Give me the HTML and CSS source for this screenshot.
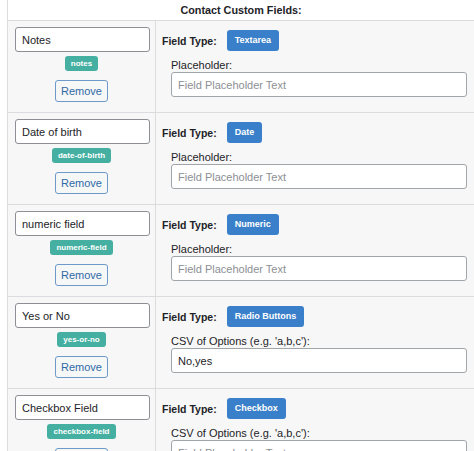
FILE: index.html
```html
<!DOCTYPE html>
<html>
<head>
<meta charset="utf-8">
<link rel="stylesheet" href="styles.css">
</head>
<body>
<div class="panel">
  <div class="panel-head">Contact Custom Fields:</div>

  <div class="row">
    <div class="cell-left">
      <input class="name-input" type="text" value="Notes">
      <span class="slug">notes</span>
      <button class="remove">Remove</button>
    </div>
    <div class="cell-right">
      <div class="type-line"><span class="type-label">Field Type:</span><span class="type-badge">Textarea</span></div>
      <div class="sub">
        <div class="sub-label">Placeholder:</div>
        <input class="sub-input" type="text" placeholder="Field Placeholder Text">
      </div>
    </div>
  </div>

  <div class="row">
    <div class="cell-left">
      <input class="name-input" type="text" value="Date of birth">
      <span class="slug">date-of-birth</span>
      <button class="remove">Remove</button>
    </div>
    <div class="cell-right">
      <div class="type-line"><span class="type-label">Field Type:</span><span class="type-badge">Date</span></div>
      <div class="sub">
        <div class="sub-label">Placeholder:</div>
        <input class="sub-input" type="text" placeholder="Field Placeholder Text">
      </div>
    </div>
  </div>

  <div class="row">
    <div class="cell-left">
      <input class="name-input" type="text" value="numeric field">
      <span class="slug">numeric-field</span>
      <button class="remove">Remove</button>
    </div>
    <div class="cell-right">
      <div class="type-line"><span class="type-label">Field Type:</span><span class="type-badge">Numeric</span></div>
      <div class="sub">
        <div class="sub-label">Placeholder:</div>
        <input class="sub-input" type="text" placeholder="Field Placeholder Text">
      </div>
    </div>
  </div>

  <div class="row">
    <div class="cell-left">
      <input class="name-input" type="text" value="Yes or No">
      <span class="slug">yes-or-no</span>
      <button class="remove">Remove</button>
    </div>
    <div class="cell-right">
      <div class="type-line"><span class="type-label">Field Type:</span><span class="type-badge">Radio Buttons</span></div>
      <div class="sub">
        <div class="sub-label">CSV of Options (e.g. 'a,b,c'):</div>
        <input class="sub-input" type="text" value="No,yes">
      </div>
    </div>
  </div>

  <div class="row">
    <div class="cell-left">
      <input class="name-input" type="text" value="Checkbox Field">
      <span class="slug">checkbox-field</span>
      <button class="remove">Remove</button>
    </div>
    <div class="cell-right">
      <div class="type-line"><span class="type-label">Field Type:</span><span class="type-badge">Checkbox</span></div>
      <div class="sub">
        <div class="sub-label">CSV of Options (e.g. 'a,b,c'):</div>
        <input class="sub-input" type="text" placeholder="Field Placeholder Text">
      </div>
    </div>
  </div>
</div>
</body>
</html>
```

FILE: styles.css
```css
html, body {
  margin: 0;
  padding: 0;
  background: #ffffff;
  overflow: hidden;
}
body {
  font-family: "Liberation Sans", Arial, sans-serif;
  font-size: 11px;
  color: #1d2327;
}
* { box-sizing: border-box; }

.panel {
  margin-left: 7px;
  border-left: 1px solid #dcdcde;
}
.panel-head {
  height: 21px;
  line-height: 20px;
  border-bottom: 1px solid #dcdcde;
  text-align: center;
  font-weight: bold;
  font-size: 10.8px;
  background: #ffffff;
}
.row {
  display: grid;
  grid-template-columns: 148px 1fr;
  background: #f7f7f7;
  border-bottom: 1px solid #dcdcde;
}
.cell-left {
  border-right: 1px solid #dcdcde;
  padding: 6px 7px 10px 7px;
  display: flex;
  flex-direction: column;
  align-items: center;
}
.name-input {
  align-self: flex-start;
  width: 135px;
  height: 25px;
  border: 1px solid #8c8f94;
  border-radius: 3px;
  background: #fff;
  padding: 0 6px;
  font-family: inherit;
  font-size: 11px;
  color: #1d2327;
  margin: 0;
}
.slug {
  margin-top: 4px;
  height: 15px;
  line-height: 15px;
  padding: 0 6px;
  background: #45b0a1;
  color: #fff;
  font-weight: bold;
  font-size: 8px;
  border-radius: 3px;
}
.remove {
  margin-top: 9px;
  height: 22px;
  padding: 0 5px;
  border: 1px solid #6d9acb;
  border-radius: 3px;
  background: #f6f7f7;
  color: #2f6aa8;
  font-family: inherit;
  font-size: 11px;
  line-height: 20px;
}
.cell-right {
  padding: 9px 7px 10px 6px;
}
.type-line {
  display: flex;
  align-items: center;
  gap: 10px;
}
.type-label {
  font-weight: bold;
  font-size: 10.5px;
}
.type-badge {
  height: 21px;
  line-height: 21px;
  padding: 0 8px;
  background: #3a7fc9;
  color: #fff;
  font-weight: bold;
  font-size: 9px;
  border-radius: 3px;
}
.sub {
  margin-left: 9px;
  margin-top: 8px;
}
.sub-label {
  line-height: 13px;
  font-size: 11px;
}
.sub-input {
  display: block;
  width: 100%;
  height: 25px;
  margin: 0;
  border: 1px solid #a0a5aa;
  border-radius: 3px;
  background: #fff;
  padding: 0 6px;
  font-family: inherit;
  font-size: 11px;
  color: #1d2327;
}
.sub-input::placeholder {
  color: #8c8f94;
}
```
